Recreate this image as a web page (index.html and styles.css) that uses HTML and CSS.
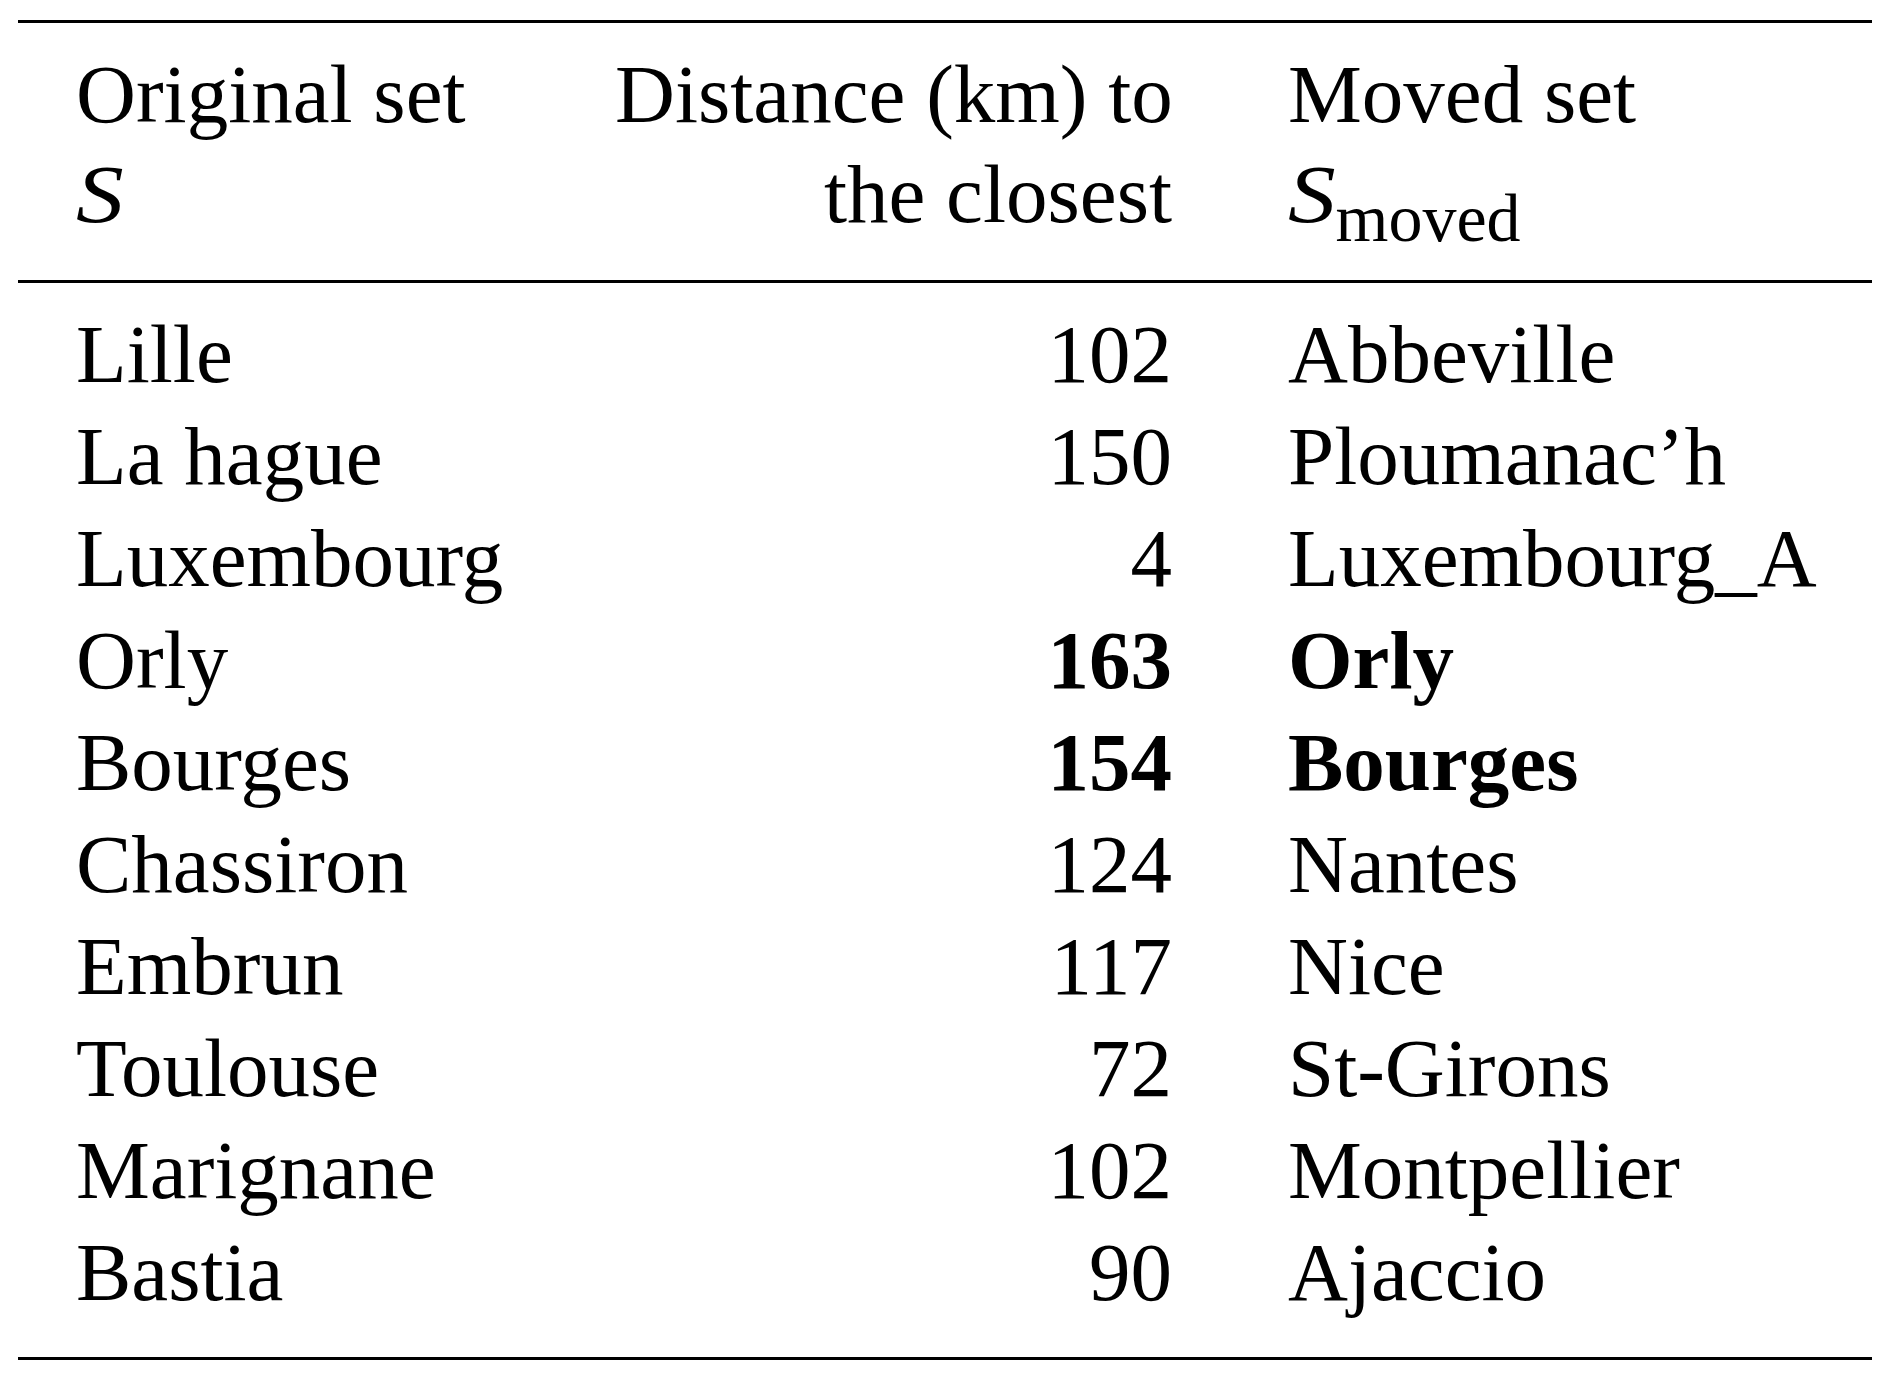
FILE: index.html
```html
<!DOCTYPE html>
<html lang="en">
<head>
<meta charset="utf-8">
<title>Original and moved station sets</title>
<link rel="stylesheet" href="styles.css">
</head>
<body>
<table class="tbl">
  <colgroup>
    <col class="c1">
    <col class="c2">
    <col class="c3">
  </colgroup>
  <thead>
    <tr>
      <th class="l">Original set<br><span class="cal">S</span></th>
      <th class="r">Distance (km) to<br>the closest</th>
      <th class="l">Moved set<br><span class="cal">S</span><span class="sub">moved</span></th>
    </tr>
  </thead>
  <tbody>
    <tr class="first"><td class="l">Lille</td><td class="r">102</td><td class="l">Abbeville</td></tr>
    <tr><td class="l">La hague</td><td class="r">150</td><td class="l">Ploumanac’h</td></tr>
    <tr><td class="l">Luxembourg</td><td class="r">4</td><td class="l">Luxembourg_A</td></tr>
    <tr><td class="l">Orly</td><td class="r b">163</td><td class="l b">Orly</td></tr>
    <tr><td class="l">Bourges</td><td class="r b">154</td><td class="l b">Bourges</td></tr>
    <tr><td class="l">Chassiron</td><td class="r">124</td><td class="l">Nantes</td></tr>
    <tr><td class="l">Embrun</td><td class="r">117</td><td class="l">Nice</td></tr>
    <tr><td class="l">Toulouse</td><td class="r">72</td><td class="l">St-Girons</td></tr>
    <tr><td class="l">Marignane</td><td class="r">102</td><td class="l">Montpellier</td></tr>
    <tr class="last"><td class="l">Bastia</td><td class="r">90</td><td class="l">Ajaccio</td></tr>
  </tbody>
</table>
</body>
</html>
```
FILE: styles.css
```css
html, body {
  margin: 0;
  padding: 0;
  background: #ffffff;
}

body {
  font-family: "Liberation Serif", "Times New Roman", serif;
  color: #000000;
}

.tbl {
  margin: 20px 0 0 18px;
  width: 1854px;
  table-layout: fixed;
  border-collapse: separate;
  border-spacing: 0;
  font-size: 83px;
}

.c1 { width: 539px; }
.c2 { width: 673px; }
.c3 { width: 642px; }

.tbl th,
.tbl td {
  padding: 0 58px;
  font-weight: normal;
  white-space: nowrap;
  vertical-align: top;
}

.tbl th {
  line-height: 100px;
  border-top: 3px solid #000;
  border-bottom: 3px solid #000;
  padding-top: 21px;
  padding-bottom: 36px;
}

.tbl td {
  line-height: 102px;
  height: 102px;
}

.tbl .first td { padding-top: 20px; }
.tbl .last td {
  padding-bottom: 34px;
  border-bottom: 3px solid #000;
}

.l { text-align: left; }
.r { text-align: right; }
.tbl .b { font-weight: bold; }

.cal {
  font-style: italic;
  display: inline-block;
  transform: scaleX(1.15);
  transform-origin: left center;
}

.sub {
  font-size: 68px;
  line-height: 0;
  vertical-align: -19px;
  margin-left: 6px;
}
```
